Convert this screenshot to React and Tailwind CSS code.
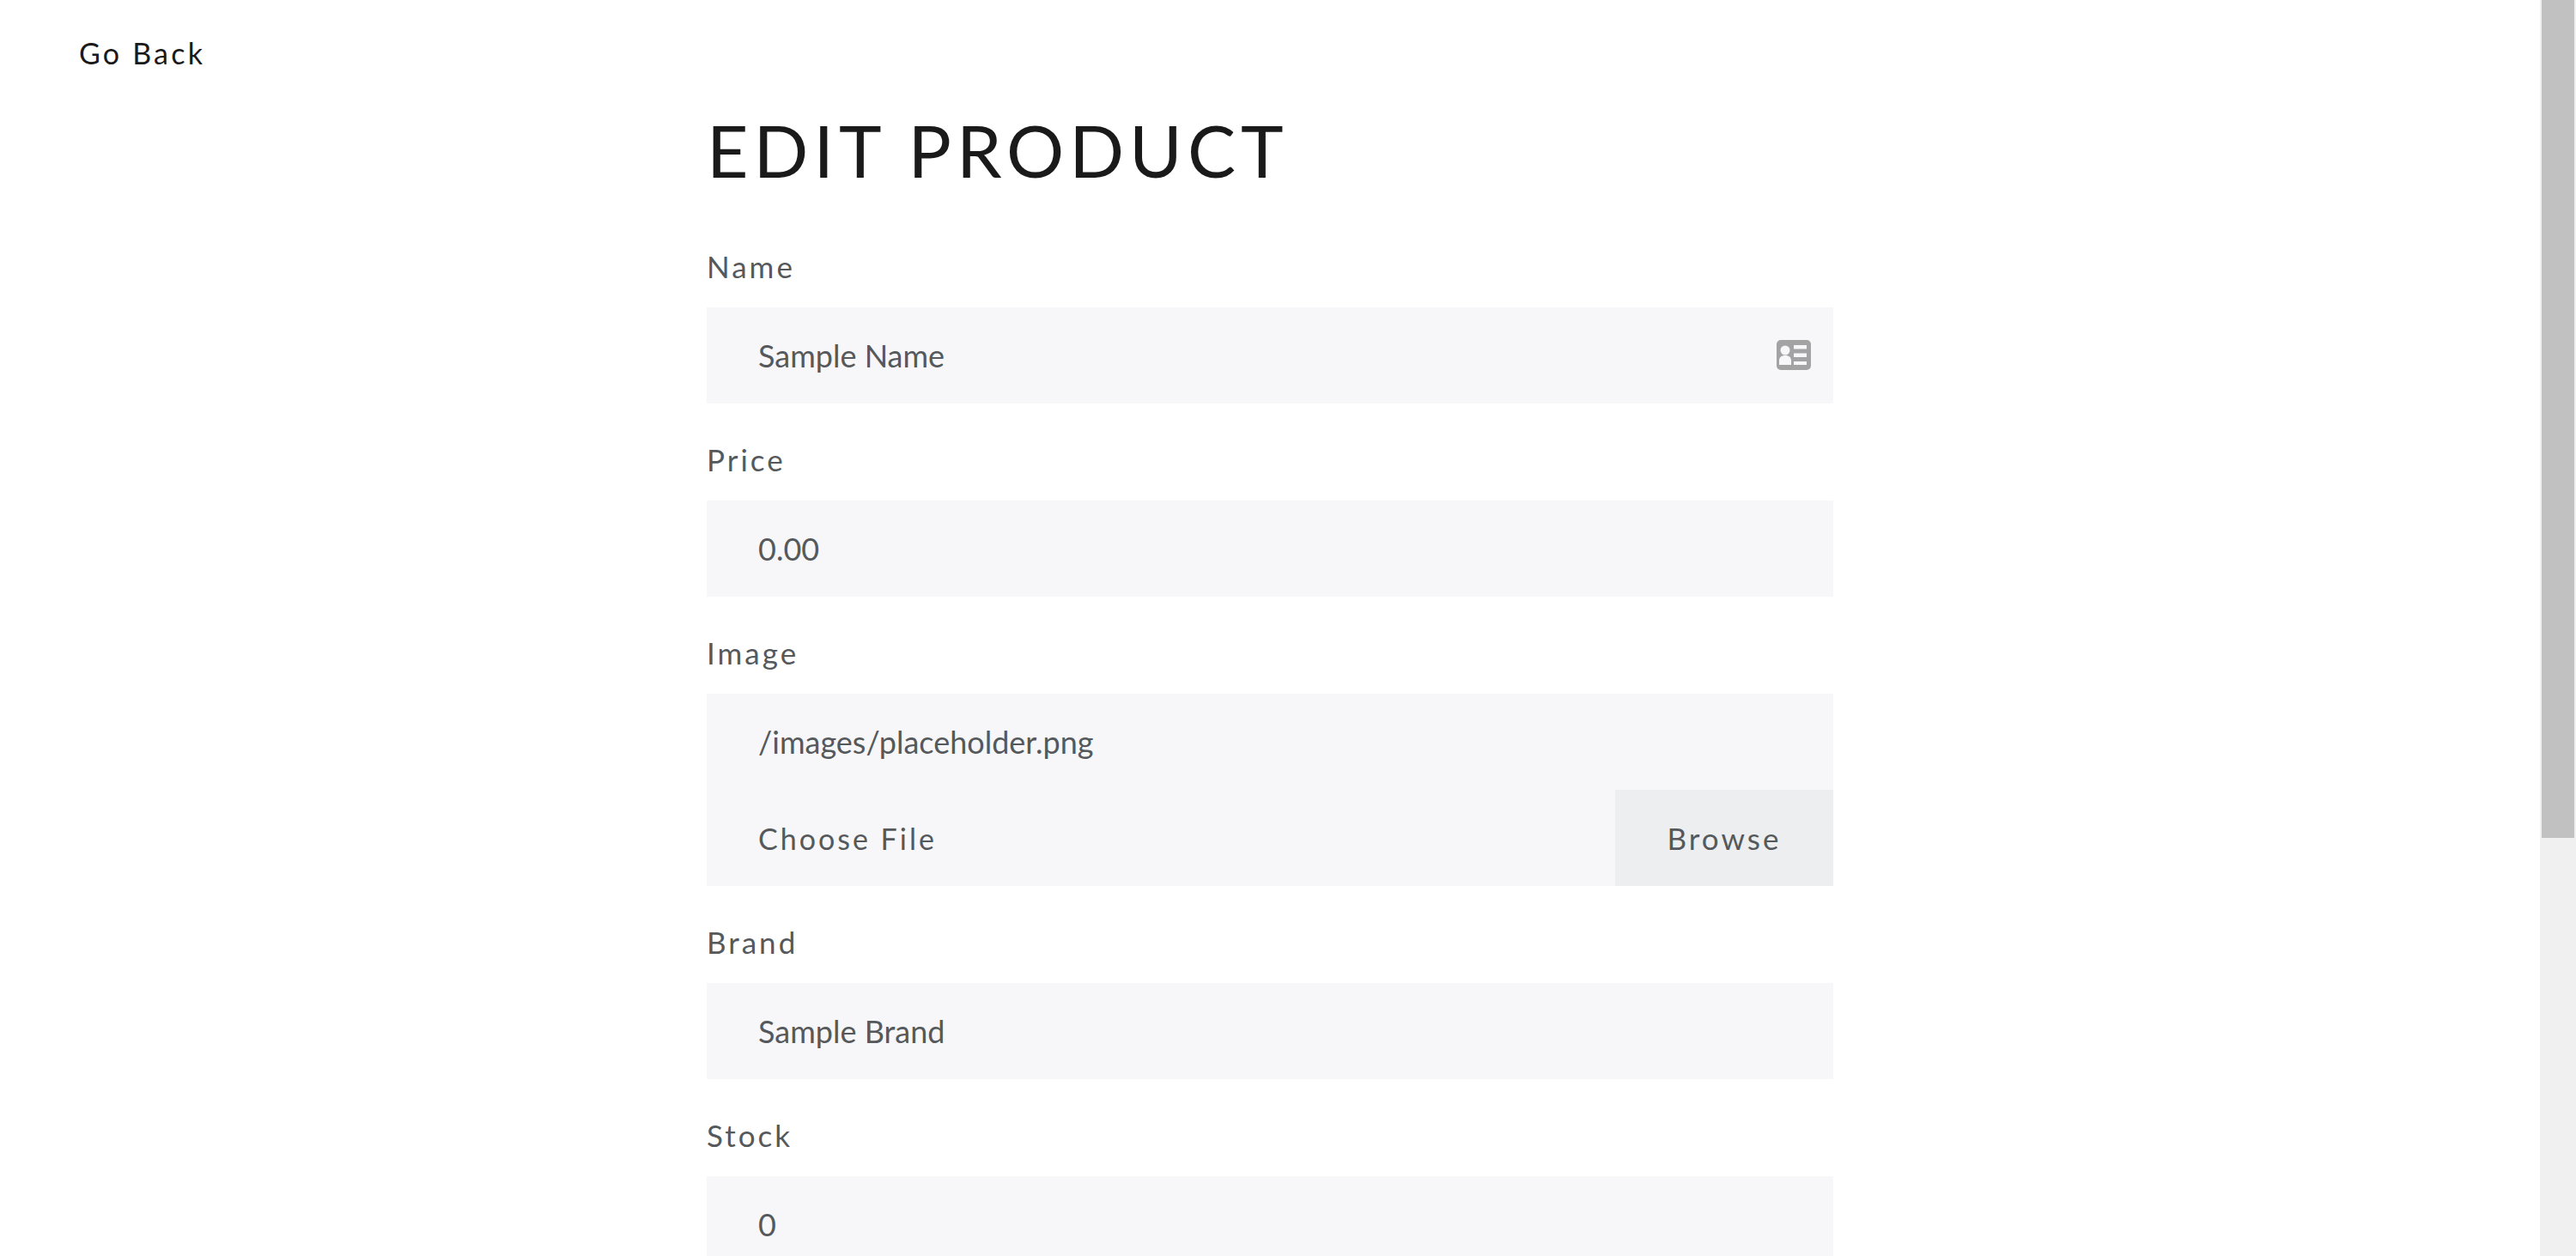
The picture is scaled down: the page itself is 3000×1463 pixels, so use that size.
import React from 'react'

function IdCardIcon() {
  return (
    <svg className="absolute right-[26px] top-[38px] w-[40px] h-[35px]" viewBox="0 0 40 35">
      <rect width="40" height="35" rx="5" fill="#a3a3a3" />
      <circle cx="10" cy="12" r="5.5" fill="#f7f7f9" />
      <path d="M3 29v-5c0-4 3-6 7-6s7 2 7 6v5z" fill="#f7f7f9" />
      <rect x="20" y="6" width="15" height="4.5" fill="#f7f7f9" />
      <rect x="20" y="15.5" width="15" height="4.5" fill="#f7f7f9" />
      <rect x="20" y="25" width="15" height="4" fill="#f7f7f9" />
    </svg>
  )
}

function Field({ label, value, icon }) {
  return (
    <div className="mb-[32px]">
      <label className="block h-[81px] pt-[9px] text-[35px] leading-[48px] tracking-[3px] text-[#55595c]">{label}</label>
      <div className="relative">
        <input
          readOnly
          value={value}
          className="block w-full h-[112px] bg-[#f7f7f9] px-[60px] text-[36px] text-[#55595c] outline-none"
        />
        {icon && <IdCardIcon />}
      </div>
    </div>
  )
}

function ImageField() {
  return (
    <div className="mb-[32px]">
      <label className="block h-[81px] pt-[9px] text-[35px] leading-[48px] tracking-[3px] text-[#55595c]">Image</label>
      <input
        readOnly
        value="/images/placeholder.png"
        className="block w-full h-[112px] bg-[#f7f7f9] px-[60px] text-[36px] text-[#55595c] outline-none"
      />
      <div className="flex h-[112px] bg-[#f7f7f9] tracking-[3px] text-[#55595c]">
        <span className="flex-1 flex items-center px-[60px] text-[34px]">Choose File</span>
        <span className="w-[254px] flex items-center justify-center bg-[#eceeef] text-[35px]">Browse</span>
      </div>
    </div>
  )
}

function ScrollRail() {
  return (
    <div className="w-[42px] h-screen shrink-0 bg-[#f0f0f0] px-[2px]">
      <div className="h-[976px] bg-[#c1c1c1]" />
    </div>
  )
}

export default function App() {
  return (
    <div className="flex h-screen overflow-hidden bg-white font-['Lato','Noto_Sans',sans-serif]">
      <main className="flex-1 min-w-0">
        <a href="#" className="block pl-[92px] pt-[38px] h-[120px] text-[34px] leading-[48px] tracking-[3.2px] text-[#1a1a1a]">Go Back</a>
        <div className="w-[1312px] mx-auto">
          <h1 className="h-[157px] text-[84px] leading-[110px] tracking-[6px] text-[#1a1a1a] uppercase">Edit Product</h1>
          <Field label="Name" value="Sample Name" icon />
          <Field label="Price" value="0.00" />
          <ImageField />
          <Field label="Brand" value="Sample Brand" />
          <Field label="Stock" value="0" />
        </div>
      </main>
      <ScrollRail />
    </div>
  )
}
